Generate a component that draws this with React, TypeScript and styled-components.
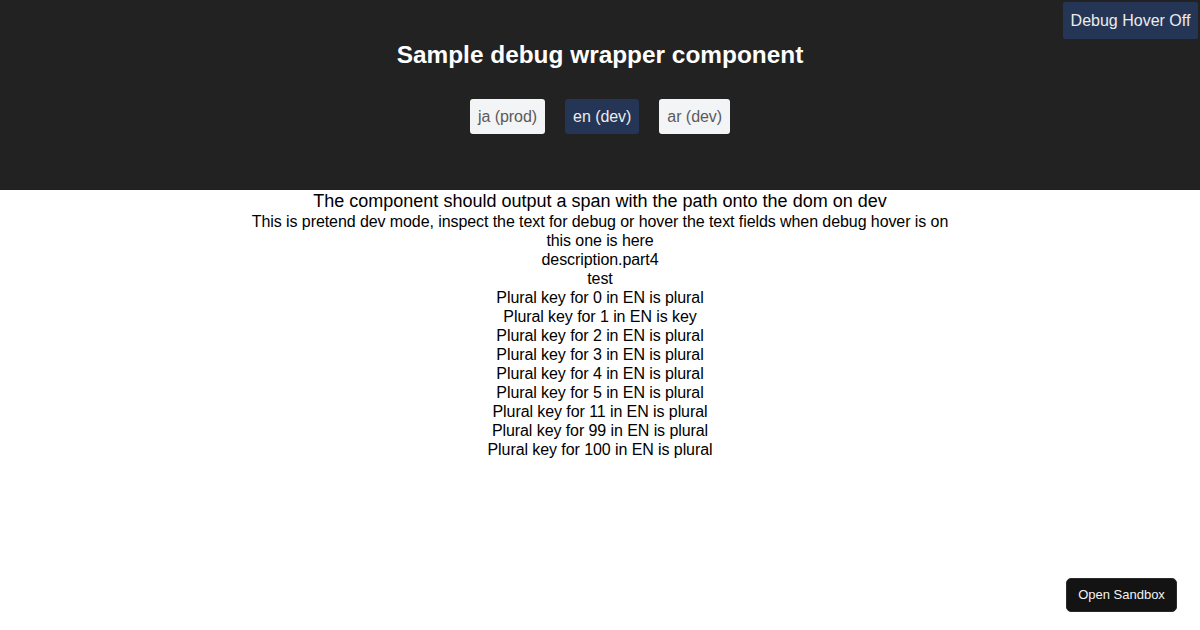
import React from "react";
import styled, { createGlobalStyle } from "styled-components";

const Global = createGlobalStyle`
  html, body { margin: 0; padding: 0; background: #fff; }
  body { font-family: "Liberation Sans", Arial, sans-serif; color: #000; }
`;

const Header = styled.header`
  height: 190px;
  background: #222222;
  display: flex;
  flex-direction: column;
  align-items: center;
  box-sizing: border-box;
  padding-top: 41px;
`;

const Title = styled.h1`
  margin: 0;
  font-size: 24.4px;
  line-height: 28px;
  font-weight: 700;
  color: #ffffff;
`;

const LangRow = styled.div`
  display: flex;
  gap: 20px;
  margin-top: 30px;
`;

const LangButton = styled.button<{ $active?: boolean }>`
  height: 35px;
  padding: 0 8px;
  border: none;
  border-radius: 3px;
  font-family: "Liberation Sans", Arial, sans-serif;
  font-size: 16px;
  letter-spacing: -0.05px;
  background: ${(p) => (p.$active ? "#253556" : "#f3f4f6")};
  color: ${(p) => (p.$active ? "#ececec" : "#5a5a5a")};
  cursor: pointer;
`;

const DebugToggle = styled.button`
  position: fixed;
  top: 2px;
  right: 2px;
  width: 135px;
  height: 37px;
  border: none;
  border-radius: 2px;
  background: #253556;
  color: #ececec;
  font-family: "Liberation Sans", Arial, sans-serif;
  font-size: 16px;
  padding: 0;
  cursor: pointer;
`;

const Content = styled.main`
  display: flex;
  flex-direction: column;
  align-items: center;
  text-align: center;
`;

const Heading = styled.div`
  font-size: 18px;
  line-height: 22px;
`;

const Line = styled.div`
  font-size: 16px;
  line-height: 19px;
  letter-spacing: -0.08px;
`;

const SandboxButton = styled.button`
  position: fixed;
  right: 23px;
  bottom: 18px;
  width: 111px;
  height: 34px;
  border: 1px solid #2a2a2a;
  border-radius: 5px;
  background: #131313;
  color: #f2f2f2;
  font-family: "Liberation Sans", Arial, sans-serif;
  font-size: 13px;
  line-height: 32px;
  padding: 0;
  cursor: pointer;
`;

const plurals: [number, string][] = [
  [0, "plural"],
  [1, "key"],
  [2, "plural"],
  [3, "plural"],
  [4, "plural"],
  [5, "plural"],
  [11, "plural"],
  [99, "plural"],
  [100, "plural"],
];

export default function App() {
  return (
    <>
      <Global />
      <Header>
        <Title>Sample debug wrapper component</Title>
        <LangRow>
          <LangButton>ja (prod)</LangButton>
          <LangButton $active>en (dev)</LangButton>
          <LangButton>ar (dev)</LangButton>
        </LangRow>
      </Header>
      <DebugToggle>Debug Hover Off</DebugToggle>
      <Content>
        <Heading>The component should output a span with the path onto the dom on dev</Heading>
        <Line>This is pretend dev mode, inspect the text for debug or hover the text fields when debug hover is on</Line>
        <Line>this one is here</Line>
        <Line>description.part4</Line>
        <Line>test</Line>
        {plurals.map(([n, w]) => (
          <Line key={n}>
            Plural key for {n} in EN is {w}
          </Line>
        ))}
      </Content>
      <SandboxButton>Open Sandbox</SandboxButton>
    </>
  );
}
